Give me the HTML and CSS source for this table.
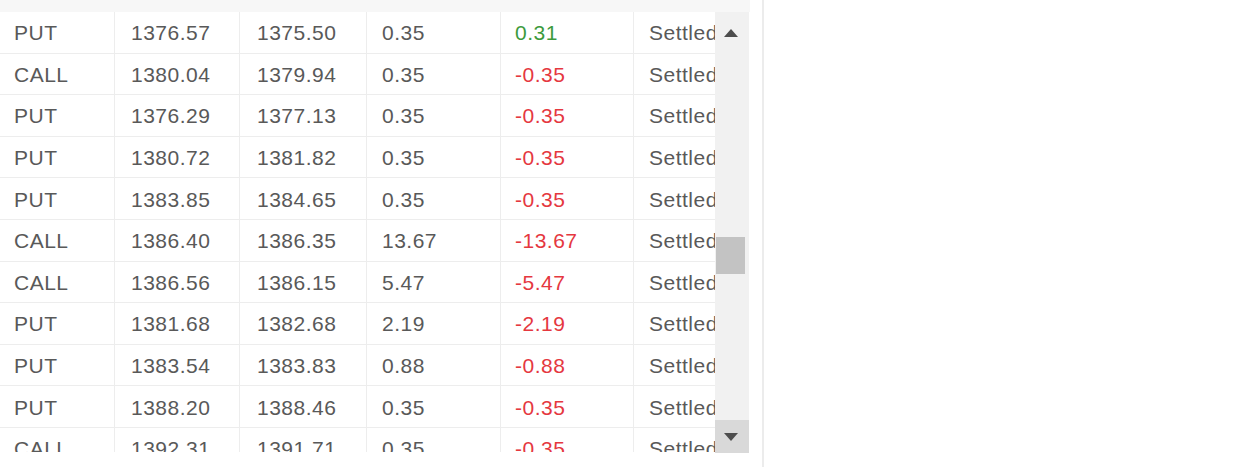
FILE: index.html
```html
<!DOCTYPE html>
<html>
<head>
<meta charset="utf-8">
<link rel="stylesheet" href="styles.css">
</head>
<body>
<div class="panel">
  <div class="head-strip"></div>
  <div class="body">
    <div class="grid">
      <div class="row"><div class="c c1">PUT</div><div class="c c2">1376.57</div><div class="c c3">1375.50</div><div class="c c4">0.35</div><div class="c c5 pos">0.31</div><div class="c c6">Settled</div></div>
      <div class="row"><div class="c c1">CALL</div><div class="c c2">1380.04</div><div class="c c3">1379.94</div><div class="c c4">0.35</div><div class="c c5 neg">-0.35</div><div class="c c6">Settled</div></div>
      <div class="row"><div class="c c1">PUT</div><div class="c c2">1376.29</div><div class="c c3">1377.13</div><div class="c c4">0.35</div><div class="c c5 neg">-0.35</div><div class="c c6">Settled</div></div>
      <div class="row"><div class="c c1">PUT</div><div class="c c2">1380.72</div><div class="c c3">1381.82</div><div class="c c4">0.35</div><div class="c c5 neg">-0.35</div><div class="c c6">Settled</div></div>
      <div class="row"><div class="c c1">PUT</div><div class="c c2">1383.85</div><div class="c c3">1384.65</div><div class="c c4">0.35</div><div class="c c5 neg">-0.35</div><div class="c c6">Settled</div></div>
      <div class="row"><div class="c c1">CALL</div><div class="c c2">1386.40</div><div class="c c3">1386.35</div><div class="c c4">13.67</div><div class="c c5 neg">-13.67</div><div class="c c6">Settled</div></div>
      <div class="row"><div class="c c1">CALL</div><div class="c c2">1386.56</div><div class="c c3">1386.15</div><div class="c c4">5.47</div><div class="c c5 neg">-5.47</div><div class="c c6">Settled</div></div>
      <div class="row"><div class="c c1">PUT</div><div class="c c2">1381.68</div><div class="c c3">1382.68</div><div class="c c4">2.19</div><div class="c c5 neg">-2.19</div><div class="c c6">Settled</div></div>
      <div class="row"><div class="c c1">PUT</div><div class="c c2">1383.54</div><div class="c c3">1383.83</div><div class="c c4">0.88</div><div class="c c5 neg">-0.88</div><div class="c c6">Settled</div></div>
      <div class="row"><div class="c c1">PUT</div><div class="c c2">1388.20</div><div class="c c3">1388.46</div><div class="c c4">0.35</div><div class="c c5 neg">-0.35</div><div class="c c6">Settled</div></div>
      <div class="row"><div class="c c1">CALL</div><div class="c c2">1392.31</div><div class="c c3">1391.71</div><div class="c c4">0.35</div><div class="c c5 neg">-0.35</div><div class="c c6">Settled</div></div>
    </div>
    <div class="scrollbar">
      <div class="sb-btn up"><svg width="14" height="8" viewBox="0 0 14 8"><polygon points="7,0 14,8 0,8" fill="#4d4d4d"/></svg></div>
      <div class="sb-track">
        <div class="sb-space top"></div>
        <div class="sb-thumb"></div>
        <div class="sb-space bottom"></div>
      </div>
      <div class="sb-btn down"><svg width="14" height="8" viewBox="0 0 14 8"><polygon points="0,0 14,0 7,8" fill="#4d4d4d"/></svg></div>
    </div>
  </div>
</div>
</body>
</html>
```

FILE: styles.css
```css
html, body {
  margin: 0;
  padding: 0;
  background: #ffffff;
}
body {
  width: 1242px;
  height: 467px;
  overflow: hidden;
  font-family: "Liberation Sans", Arial, sans-serif;
}
.panel {
  width: 762px;
  height: 467px;
  border-right: 2px solid #ececec;
  display: flex;
  flex-direction: column;
}
.head-strip {
  width: 750px;
  height: 12px;
  background: #f7f7f7;
  flex: none;
}
.body {
  display: flex;
  width: 750px;
  height: 440px;
  flex: none;
}
.grid {
  width: 715px;
  height: 440px;
  overflow: hidden;
  flex: none;
}
.row {
  display: flex;
  height: 41.6px;
  box-sizing: border-box;
  border-bottom: 1px solid #ededed;
}
.c {
  box-sizing: border-box;
  height: 100%;
  display: flex;
  align-items: center;
  padding-top: 2px;
  font-size: 21px;
  letter-spacing: 0.5px;
  color: #595959;
  white-space: nowrap;
  overflow: hidden;
  border-right: 1px solid #ededed;
  flex: none;
}
.c1 { width: 115px; padding-left: 14px; }
.c2 { width: 125px; padding-left: 16px; }
.c3 { width: 127px; padding-left: 17px; }
.c4 { width: 134px; padding-left: 15px; }
.c5 { width: 133px; padding-left: 14px; }
.c6 { width: 81px; padding-left: 15px; border-right: none; }
.pos { color: #3c9a3c; }
.neg { color: #e5383f; }
.scrollbar {
  width: 34px;
  height: 441px;
  display: flex;
  flex-direction: column;
  background: #f1f1f1;
  flex: none;
}
.sb-btn {
  height: 33px;
  display: flex;
  align-items: center;
  justify-content: center;
  flex: none;
}
.sb-btn.up {
  height: 42px;
  padding-right: 2px;
}
.sb-btn.down {
  background: #d9d9d9;
  padding-right: 2px;
}
.sb-track {
  flex: 1;
  display: flex;
  flex-direction: column;
  align-items: center;
}
.sb-space.top { height: 183px; flex: none; }
.sb-thumb {
  width: 29px;
  height: 37px;
  background: #c3c3c3;
  margin-right: 3px;
  flex: none;
}
.sb-space.bottom { flex: 1; }
```
